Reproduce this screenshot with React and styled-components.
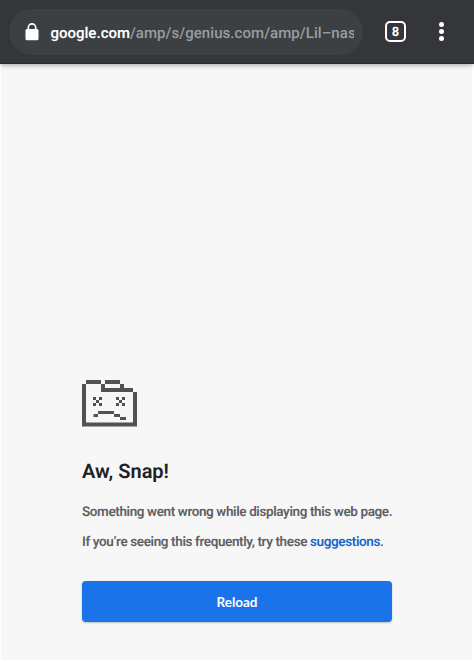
import React from "react"
import styled, { createGlobalStyle } from "styled-components"

export default function App() {
  return (
    <>
      <GlobalStyle />
      <Screen>
        <Toolbar>
          <AddressBar>
            <LockIcon />
            <Url>
              <Host>google.com</Host>/amp/s/genius.com/amp/Lil–nas
            </Url>
          </AddressBar>
          <TabCount>8</TabCount>
          <MenuButton aria-label="Menu">
            <Dot />
            <Dot />
            <Dot />
          </MenuButton>
        </Toolbar>
        <Page>
          <SadFolder />
          <Title>Aw, Snap!</Title>
          <Message>
            Something went wrong while displaying this web page.
          </Message>
          <Message>
            If you’re seeing this frequently, try these{" "}
            <Link href="#">suggestions</Link>.
          </Message>
          <ReloadButton>Reload</ReloadButton>
        </Page>
      </Screen>
    </>
  )
}

function LockIcon() {
  return (
    <Lock viewBox="0 0 14 18">
      <path d="M3.3 7V4.6a3.7 3.7 0 0 1 7.4 0V7" fill="none" stroke="#fff" strokeWidth="1.7" />
      <rect x="0.5" y="6" width="13" height="11.3" rx="1.5" fill="#fff" />
    </Lock>
  )
}

function SadFolder() {
  return (
    <Folder viewBox="0 0 55 47">
      <path d="M4 0h15v4H4zM23 0h15v4H23zM19 4h4v4h-4zM38 4h4v4h-4zM19 8h32v4H19zM0 4h4v42.500H0zM51 12h4v34.500h-4zM0 42.500h55v4H0z" />
      <path d="M11 17h3v3h-3zM17 17h3v3h-3zM14 20h3v3h-3zM11 23h3v3h-3zM17 23h3v3h-3z" />
      <path d="M34 17h3v3h-3zM40 17h3v3h-3zM37 20h3v3h-3zM34 23h3v3h-3zM40 23h3v3h-3z" />
      <path d="M16 31h16v3H16zM11.500 34h4.500v3h-4.500zM32 34h6v3h-6zM38 37h6v3h-6z" />
    </Folder>
  )
}

const GlobalStyle = createGlobalStyle`
  body {
    margin: 0;
    background: #fff;
    font-family: Roboto, "Liberation Sans", sans-serif;
    text-rendering: geometricPrecision;
  }
`
const Screen = styled.div`
  display: flex;
  flex-direction: column;
  height: 662px;
  overflow: hidden;
`
const Toolbar = styled.header`
  display: flex;
  align-items: center;
  box-sizing: border-box;
  height: 64px;
  flex-shrink: 0;
  padding: 0 9px;
  background: #35363a;
  border-bottom: 1px solid #292a2e;
  box-shadow: 0 1px 5px rgba(0, 0, 0, 0.35);
  z-index: 1;
`
const AddressBar = styled.div`
  display: flex;
  align-items: center;
  box-sizing: border-box;
  width: 354px;
  height: 46px;
  padding: 0 9px 0 16px;
  border-radius: 23px;
  background: #3c4043;
`
const Lock = styled.svg`
  width: 14px;
  height: 18px;
  flex-shrink: 0;
`
const Url = styled.div`
  margin-left: 11px;
  padding-top: 2px;
  flex: 1;
  overflow: hidden;
  white-space: nowrap;
  font-size: 15px;
  font-weight: 500;
  line-height: 22px;
  letter-spacing: 0.06px;
  text-indent: 0.5px;
  color: #9a9da0;
`
const Host = styled.span`
  color: #fff;
  font-weight: 600;
  letter-spacing: -0.02px;
`
const TabCount = styled.div`
  display: flex;
  align-items: center;
  justify-content: center;
  box-sizing: border-box;
  width: 21px;
  height: 21px;
  margin-left: 22px;
  padding-top: 1px;
  border: 2px solid #fff;
  border-radius: 5px;
  color: #fff;
  font-size: 13px;
  font-weight: 700;
`
const MenuButton = styled.button`
  display: flex;
  flex-direction: column;
  align-items: center;
  gap: 2px;
  margin-left: 33px;
  padding: 0;
  border: 0;
  background: none;
`
const Dot = styled.span`
  width: 5px;
  height: 5px;
  border-radius: 50%;
  background: #fff;
`
const Page = styled.main`
  flex: 1;
  box-sizing: border-box;
  margin: 0 2px 2px 1px;
  padding: 316px 80px 0 81px;
  background: #f7f7f7;
`
const Folder = styled.svg`
  display: block;
  width: 55px;
  height: 47px;
  fill: #525252;
`
const Title = styled.h1`
  margin: 31px 0 19px;
  font-size: 20px;
  font-weight: 600;
  line-height: 26px;
  color: #202124;
`
const Message = styled.p`
  margin: 0 0 12px;
  font-size: 13.5px;
  font-weight: 600;
  line-height: 18px;
  letter-spacing: -0.39px;
  white-space: nowrap;
  color: #5f6064;
`
const Link = styled.a`
  color: #1967c8;
  text-decoration: none;
`
const ReloadButton = styled.button`
  display: block;
  width: 310px;
  height: 41px;
  margin-top: 30px;
  border: 0;
  border-radius: 4px;
  background: #1a73e8;
  box-shadow: 0 1px 2px rgba(60, 64, 67, 0.3);
  color: #fff;
  font-family: Lato, Roboto, sans-serif;
  font-size: 13.5px;
  font-weight: 700;
`
